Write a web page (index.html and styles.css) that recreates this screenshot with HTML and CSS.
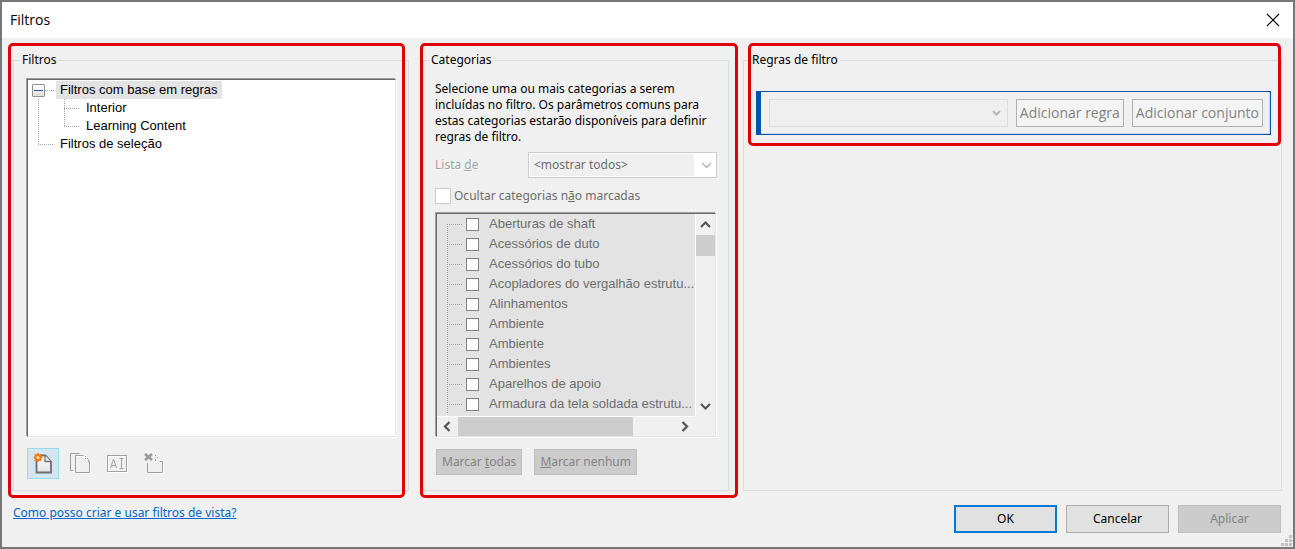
FILE: index.html
```
<!DOCTYPE html>
<html lang="pt-BR">

	<head>
		<meta charset="UTF-8">
		<title>Filtros</title>
		<link rel="stylesheet" href="styles.css">
	</head>

	<body>
		<div class="window">
			<header class="titlebar">
				<h1>Filtros</h1>
				<button class="close" type="button" aria-label="Fechar">
					<svg width="14" height="14" viewBox="0 0 14 14"><path d="M1 1L13 13M13 1L1 13" stroke="#000" stroke-width="1.1" fill="none"/></svg>
				</button>
			</header>

			<main class="panels">
				<fieldset class="group filters">
					<legend>Filtros</legend>
					<ul class="tree sunken">
						<li class="row root">
							<button class="expander" type="button" aria-label="Recolher"></button>
							<span class="dash"></span>
							<span class="label selected">Filtros com base em regras</span>
						</li>
						<li class="row"><span class="trunk"></span><span class="elbow"></span><span class="label">Interior</span></li>
						<li class="row"><span class="trunk"></span><span class="elbow last"></span><span class="label">Learning Content</span></li>
						<li class="row"><span class="elbow last"></span><span class="label">Filtros de seleção</span></li>
					</ul>
					<div class="toolbar">
						<button class="tool active" type="button" aria-label="Novo">
							<svg width="20" height="21" viewBox="0 0 20 21">
								<defs><linearGradient id="page" x1="0" y1="0" x2="0" y2="1"><stop offset="0" stop-color="#fff"/><stop offset="1" stop-color="#e2e2e2"/></linearGradient></defs>
								<path d="M3.5 4.5V19.5H18V8.500L12.500 2.500H7" fill="url(#page)" stroke="#6d6e70" stroke-width="1.800"/>
								<path d="M12 2.500V8.500H18" fill="#f4f4f4" stroke="#6d6e70" stroke-width="1.300"/>
								<circle cx="5" cy="4.500" r="2.600" fill="#ffe0bd" stroke="#f57a10" stroke-width="2"/>
								<path d="M5 0V2M5 7V9M.5 4.500H2M8 4.500H9.500M1.800 1.300L3.200 2.700M8.200 1.300L6.800 2.700M1.800 7.700L3.200 6.300M8.200 7.700L6.800 6.300" stroke="#f57a10" stroke-width="1.600"/>
							</svg>
						</button>
						<button class="tool" type="button" aria-label="Duplicar" disabled>
							<svg width="21" height="21" viewBox="0 0 21 21" fill="none">
								<path d="M6.500 20.500H20.500V9M2.500 18.500H4M7 3.500H15" stroke="#fff"/>
								<path d="M9.500.5H.5V17.500H3M13.500 2.500H5.500V19.500H19.500V8.500H18M15 3.500H16M15 5.500H16M17 5.500H18M18.500 6.500V8" stroke="#a0a0a0"/>
							</svg>
						</button>
						<button class="tool" type="button" aria-label="Renomear" disabled>
							<svg width="21" height="18" viewBox="0 0 21 18" fill="none">
								<rect x="1.500" y="1.500" width="19" height="16" stroke="#fff"/>
								<rect x=".5" y=".5" width="19" height="16" stroke="#a0a0a0"/>
								<path d="M3.500 13L6.500 4L9.500 13M4.500 10.500H8.500M12.500 3.500H16.500M14.500 4V13M12.500 13.500H16.500" stroke="#a0a0a0"/>
							</svg>
						</button>
						<button class="tool" type="button" aria-label="Excluir" disabled>
							<svg width="20" height="21" viewBox="0 0 20 21" fill="none">
								<path d="M4.500 20.500H19.500V9" stroke="#fff"/>
								<path d="M1 1L8 7M8 1L1 7" stroke="#999" stroke-width="2.600"/>
								<path d="M3.500 10V19.500H18.500V8.500H15.500M11 2.500H12M13.500 4V5M11.500 6V8" stroke="#a0a0a0"/>
							</svg>
						</button>
					</div>
					<div class="mark"></div>
				</fieldset>

				<fieldset class="group categories">
					<legend>Categorias</legend>
					<p class="hint">Selecione uma ou mais categorias a serem incluídas no filtro. Os parâmetros comuns para estas categorias estarão disponíveis para definir regras de filtro.</p>
					<div class="list-of">
						<label for="lista">Lista <u>d</u>e</label>
						<div class="combo">
							<select id="lista" disabled><option>&lt;mostrar todos&gt;</option></select>
							<svg class="arrow" width="11" height="7" viewBox="0 0 11 7"><path d="M1 1L5.500 5.500L10 1" stroke="#aaa" stroke-width="1.200" fill="none"/></svg>
						</div>
					</div>
					<div class="hide-unchecked">
						<input type="checkbox" id="ocultar" disabled>
						<label for="ocultar">Ocultar categorias n<u>ã</u>o marcadas</label>
					</div>
					<div class="listbox sunken">
						<ul class="items">
							<li><span class="elbow first"></span><input type="checkbox" id="c1" disabled><label for="c1">Aberturas de shaft</label></li>
							<li><span class="elbow"></span><input type="checkbox" id="c2" disabled><label for="c2">Acessórios de duto</label></li>
							<li><span class="elbow"></span><input type="checkbox" id="c3" disabled><label for="c3">Acessórios do tubo</label></li>
							<li><span class="elbow"></span><input type="checkbox" id="c4" disabled><label for="c4">Acopladores do vergalhão estrutu...</label></li>
							<li><span class="elbow"></span><input type="checkbox" id="c5" disabled><label for="c5">Alinhamentos</label></li>
							<li><span class="elbow"></span><input type="checkbox" id="c6" disabled><label for="c6">Ambiente</label></li>
							<li><span class="elbow"></span><input type="checkbox" id="c7" disabled><label for="c7">Ambiente</label></li>
							<li><span class="elbow"></span><input type="checkbox" id="c8" disabled><label for="c8">Ambientes</label></li>
							<li><span class="elbow"></span><input type="checkbox" id="c9" disabled><label for="c9">Aparelhos de apoio</label></li>
							<li><span class="elbow"></span><input type="checkbox" id="c10" disabled><label for="c10">Armadura da tela soldada estrutu...</label></li>
						</ul>
						<div class="vscroll">
							<svg width="11" height="21" viewBox="0 0 11 21"><path d="M1 13L5.500 8.500L10 13" stroke="#555" stroke-width="2.200" fill="none"/></svg>
							<span class="thumb"></span>
							<svg width="11" height="21" viewBox="0 0 11 21"><path d="M1 9L5.500 13.500L10 9" stroke="#555" stroke-width="2.200" fill="none"/></svg>
						</div>
						<div class="hscroll">
							<svg width="21" height="11" viewBox="0 0 21 11"><path d="M12.500 1L8 5.500L12.500 10" stroke="#555" stroke-width="2.200" fill="none"/></svg>
							<span class="thumb"></span>
							<svg width="21" height="11" viewBox="0 0 21 11"><path d="M8.500 1L13 5.500L8.500 10" stroke="#555" stroke-width="2.200" fill="none"/></svg>
						</div>
					</div>
					<div class="check-buttons">
						<button type="button" disabled>Marcar <u>t</u>odas</button>
						<button type="button" disabled><u>M</u>arcar nenhum</button>
					</div>
					<div class="mark"></div>
				</fieldset>

				<fieldset class="group rules">
					<legend>Regras de filtro</legend>
					<div class="rule">
						<div class="combo">
							<select aria-label="Regra" disabled><option></option></select>
							<svg class="arrow" width="9" height="7" viewBox="0 0 9 7"><path d="M1 1L4.500 4.500L8 1" stroke="#b9b9b9" stroke-width="2" fill="none"/></svg>
						</div>
						<button type="button" disabled>Adicionar regra</button>
						<button type="button" disabled>Adicionar conjunto</button>
					</div>
					<div class="mark"></div>
				</fieldset>
			</main>

			<footer class="footer">
				<a href="#">Como posso criar e usar filtros de vista?</a>
				<div class="actions">
					<button class="default" type="button">OK</button>
					<button type="button">Cancelar</button>
					<button type="button" disabled>Aplicar</button>
				</div>
				<svg class="grip" width="11" height="11" viewBox="0 0 11 11" fill="#bfbfbf">
					<path d="M8 0h3v3h-3zM4 4h3v3h-3zM8 4h3v3h-3zM0 8h3v3h-3zM4 8h3v3h-3zM8 8h3v3h-3z"/>
				</svg>
			</footer>
		</div>
	</body>

</html>
```
FILE: styles.css
```
* {
	margin: 0;
	padding: 0;
	box-sizing: border-box;
}

body {
	font: 12px/16px "Noto Sans", Tahoma, sans-serif;
	color: #000;
}

button,
select,
input {
	font: inherit;
	color: inherit;
	border-radius: 0;
}

ul {
	list-style: none;
}

.window {
	position: relative;
	display: flex;
	flex-direction: column;
	min-height: 100vh;
	border: 2px solid #777;
	background: #f0f0f0;
}

/* title bar */
.titlebar {
	display: flex;
	align-items: center;
	justify-content: space-between;
	height: 36px;
	padding: 0 13px 0 8px;
	background: #fff;
}

.titlebar h1 {
	font: 14px/20px "Open Sans", sans-serif;
}

.close {
	display: flex;
	border: none;
	background: none;
}

/* group boxes */
.panels {
	flex: 1;
	display: grid;
	grid-template-columns: 396fr 306fr 539fr;
	gap: 14px;
	padding: 14px 11px 0;
}

.group {
	position: relative;
	min-width: 0;
	display: flex;
	flex-direction: column;
	border: 1px solid #dcdcdc;
}

.group legend {
	margin-left: -6px;
	padding: 0 2px;
}

.mark {
	position: absolute;
	border: 3px solid #e00008;
	border-radius: 5px;
	pointer-events: none;
}

.sunken {
	margin: 1px;
	border: 1px solid;
	border-color: #696969 #e3e3e3 #e3e3e3 #696969;
	box-shadow: -1px -1px 0 #a0a0a0, 1px 1px 0 #fff;
}

/* dotted connectors */
.elbow,
.trunk,
.dash {
	--v: repeating-linear-gradient(#a0a0a0 0 1px, transparent 1px 2px);
	--h: repeating-linear-gradient(90deg, #a0a0a0 0 1px, transparent 1px 2px);
	flex: none;
	align-self: stretch;
	width: 18px;
	background: var(--v) left top / 1px 100% no-repeat, var(--h) left center / 16px 1px no-repeat;
}

.elbow.last {
	background-size: 1px 50%, 16px 1px;
}

.elbow.first {
	background-position: left bottom, left center;
	background-size: 1px 50%, 16px 1px;
}

.trunk {
	width: 26px;
	background: var(--v) left top / 1px 100% no-repeat;
}

.dash {
	width: 11px;
	background: var(--h) left center / 10px 1px no-repeat;
}

/* filters */
.filters {
	padding: 10px 11px 11px 12px;
}

.filters .mark {
	inset: -25px 3px -8px -6px;
}

.tree {
	flex: 1;
	padding-top: 1px;
	background: #fff;
	font: 13px/18px "Liberation Sans", Arial, sans-serif;
}

.row {
	display: flex;
	align-items: center;
	height: 18px;
	padding-left: 10px;
}

.row.root {
	padding-left: 4px;
}

.label {
	padding: 0 4px;
}

.selected {
	background: #e3e3e3;
}

.expander {
	width: 13px;
	height: 13px;
	border: 1px solid #919191;
	border-radius: 1px;
	background: linear-gradient(#2b57a5, #2b57a5) center / 9px 1px no-repeat, linear-gradient(#fff, #dedede);
}

.toolbar {
	display: flex;
	gap: 5px;
	padding: 10px 1px 0;
}

.tool {
	display: flex;
	align-items: center;
	justify-content: center;
	width: 32px;
	height: 31px;
	border: 1px solid transparent;
	background: none;
}

.tool.active {
	border-color: #99d9f2;
	background: #d3e6f2;
}

/* categories */
.categories {
	padding: 13px 11px 15px;
}

.categories .mark {
	inset: -25px -10px -8px -4px;
}

.list-of {
	display: flex;
	align-items: center;
	justify-content: space-between;
	padding-top: 7px;
	color: #a0a0a0;
	text-shadow: 1px 1px 0 #fff;
}

.combo {
	position: relative;
	display: flex;
}

.combo select {
	appearance: none;
	width: 100%;
	opacity: 1;
}

.combo .arrow {
	position: absolute;
	right: 5px;
	top: 0;
	bottom: 0;
	margin: auto 0;
}

.list-of .combo {
	width: 189px;
}

.list-of select {
	height: 26px;
	padding: 0 5px;
	border: 1px solid #ccc;
	color: #6d6d6d;
	background: linear-gradient(90deg, #f0f0f0, #f0f0f0) 1px 1px / calc(100% - 23px) calc(100% - 2px) no-repeat #fff;
}

.hide-unchecked {
	display: flex;
	align-items: center;
	gap: 3px;
	padding: 10px 0 8px;
	color: #6d6d6d;
}

input[type="checkbox"] {
	appearance: none;
	flex: none;
	width: 13px;
	height: 13px;
	border: 1px solid #808080;
	background: #fff;
}

.hide-unchecked input[type="checkbox"] {
	width: 16px;
	height: 16px;
	border-color: #ccc;
}

.listbox {
	flex: 1;
	display: grid;
	grid-template-columns: 1fr 20px;
	grid-template-rows: 1fr 20px;
	background: #f0f0f0;
}

.items {
	overflow: hidden;
	background: #e3e3e3;
	color: #6d6d6d;
	font: 13px/20px "Liberation Sans", Arial, sans-serif;
}

.items li {
	display: flex;
	align-items: center;
	height: 20px;
	padding-left: 10px;
	white-space: nowrap;
}

.items .elbow {
	width: 19px;
}

.items label {
	padding-left: 10px;
}

.vscroll {
	display: flex;
	flex-direction: column;
	align-items: center;
	border-left: 1px solid #fff;
}

.vscroll .thumb {
	width: 100%;
	height: 21px;
	margin-bottom: auto;
	background: #cdcdcd;
}

.hscroll {
	display: flex;
	align-items: center;
	border-top: 1px solid #fff;
}

.hscroll .thumb {
	width: 68%;
	height: 100%;
	margin-right: auto;
	background: #cdcdcd;
}

.check-buttons {
	display: flex;
	gap: 12px;
	padding: 11px 1px 0;
}

.check-buttons button {
	height: 26px;
	padding: 0 5px;
	border: 1px solid #bfbfbf;
	background: #ccc;
	color: #838383;
}

/* rules */
.rules {
	padding: 23px 10px 0 12px;
}

.rules .mark {
	inset: -25px 0 auto 4px;
	height: 103px;
}

.rule {
	display: flex;
	gap: 8px;
	padding: 7px 7px 7px 8px;
	border: 1px solid #0054a9;
	border-left-width: 5px;
	box-shadow: inset -1px -1px 0 #c4d9ee;
	font: 14px/20px "Open Sans", sans-serif;
}

.rule .combo {
	flex: 1;
}

.rule select {
	height: 28px;
	border: 1px solid #dcdcdc;
	background: #efefef;
}

.rule .arrow {
	right: 7px;
}

.rule button {
	height: 28px;
	padding: 0 3px;
	border: 1px solid #adb2b5;
	background: #f4f4f4;
	color: #838383;
}

/* footer */
.footer {
	display: flex;
	align-items: flex-start;
	justify-content: space-between;
	padding: 14px 12px 14px 11px;
}

.footer a {
	color: #0066cc;
}

.actions {
	display: flex;
	gap: 9px;
}

.actions button {
	width: 103px;
	height: 28px;
	border: 1px solid #adadad;
	background: #e1e1e1;
}

.actions .default {
	border: 2px solid #0078d7;
}

.actions button:disabled {
	border-color: #bfbfbf;
	background: #ccc;
	color: #838383;
}

.grip {
	position: absolute;
	right: 1px;
	bottom: 1px;
}
```
